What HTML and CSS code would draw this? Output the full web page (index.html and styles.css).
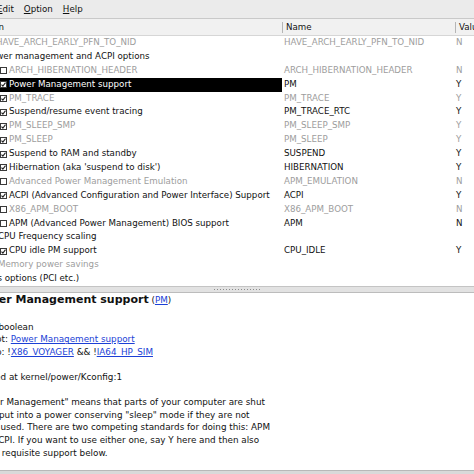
FILE: index.html
```html
<!DOCTYPE html>
<html lang="en">
<head>
    <meta charset="UTF-8">
    <meta name="viewport" content="width=device-width, initial-scale=1.0">
    <title>qconf - Linux Kernel Configuration</title>
    <link rel="stylesheet" href="styles.css">
</head>
<body>
    <div class="window">
        <div class="menubar">
            <span class="menu"><u>E</u>dit</span>
            <span class="menu"><u>O</u>ption</span>
            <span class="menu"><u>H</u>elp</span>
        </div>

        <div class="config-list">
            <div class="row header">
                <div class="col-option"><span class="hdr-option">Option</span></div>
                <div class="col-name">Name</div>
                <div class="col-value">Value</div>
            </div>

            <div class="row dim">
                <div class="col-option"><span class="sym-top">HAVE_ARCH_EARLY_PFN_TO_NID</span></div>
                <div class="col-name">HAVE_ARCH_EARLY_PFN_TO_NID</div>
                <div class="col-value">N</div>
            </div>
            <div class="row">
                <div class="col-option"><span class="menu-top">Power management and ACPI options</span></div>
                <div class="col-name"></div>
                <div class="col-value"></div>
            </div>
            <div class="row dim">
                <div class="col-option"><svg class="cb" viewBox="0 0 7 7"><rect x=".5" y=".5" width="6" height="6"/></svg>ARCH_HIBERNATION_HEADER</div>
                <div class="col-name">ARCH_HIBERNATION_HEADER</div>
                <div class="col-value">N</div>
            </div>
            <div class="row selected">
                <div class="col-option"><svg class="cb" viewBox="0 0 7 7"><rect x=".5" y=".5" width="6" height="6"/><path d="M1.5 3.6l1.4 1.5 2.6-3.4"/></svg>Power Management support</div>
                <div class="col-name">PM</div>
                <div class="col-value">Y</div>
            </div>
            <div class="row dim">
                <div class="col-option"><svg class="cb" viewBox="0 0 7 7"><rect x=".5" y=".5" width="6" height="6"/><path d="M1.5 3.6l1.4 1.5 2.6-3.4"/></svg>PM_TRACE</div>
                <div class="col-name">PM_TRACE</div>
                <div class="col-value">Y</div>
            </div>
            <div class="row">
                <div class="col-option"><svg class="cb" viewBox="0 0 7 7"><rect x=".5" y=".5" width="6" height="6"/><path d="M1.5 3.6l1.4 1.5 2.6-3.4"/></svg>Suspend/resume event tracing</div>
                <div class="col-name">PM_TRACE_RTC</div>
                <div class="col-value">Y</div>
            </div>
            <div class="row dim">
                <div class="col-option"><svg class="cb" viewBox="0 0 7 7"><rect x=".5" y=".5" width="6" height="6"/><path d="M1.5 3.6l1.4 1.5 2.6-3.4"/></svg>PM_SLEEP_SMP</div>
                <div class="col-name">PM_SLEEP_SMP</div>
                <div class="col-value">Y</div>
            </div>
            <div class="row dim">
                <div class="col-option"><svg class="cb" viewBox="0 0 7 7"><rect x=".5" y=".5" width="6" height="6"/><path d="M1.5 3.6l1.4 1.5 2.6-3.4"/></svg>PM_SLEEP</div>
                <div class="col-name">PM_SLEEP</div>
                <div class="col-value">Y</div>
            </div>
            <div class="row">
                <div class="col-option"><svg class="cb" viewBox="0 0 7 7"><rect x=".5" y=".5" width="6" height="6"/><path d="M1.5 3.6l1.4 1.5 2.6-3.4"/></svg>Suspend to RAM and standby</div>
                <div class="col-name">SUSPEND</div>
                <div class="col-value">Y</div>
            </div>
            <div class="row">
                <div class="col-option"><svg class="cb" viewBox="0 0 7 7"><rect x=".5" y=".5" width="6" height="6"/><path d="M1.5 3.6l1.4 1.5 2.6-3.4"/></svg>Hibernation (aka 'suspend to disk')</div>
                <div class="col-name">HIBERNATION</div>
                <div class="col-value">Y</div>
            </div>
            <div class="row dim">
                <div class="col-option"><svg class="cb" viewBox="0 0 7 7"><rect x=".5" y=".5" width="6" height="6"/></svg>Advanced Power Management Emulation</div>
                <div class="col-name">APM_EMULATION</div>
                <div class="col-value">N</div>
            </div>
            <div class="row">
                <div class="col-option"><svg class="cb" viewBox="0 0 7 7"><rect x=".5" y=".5" width="6" height="6"/><path d="M1.5 3.6l1.4 1.5 2.6-3.4"/></svg>ACPI (Advanced Configuration and Power Interface) Support</div>
                <div class="col-name">ACPI</div>
                <div class="col-value">Y</div>
            </div>
            <div class="row dim">
                <div class="col-option"><svg class="cb" viewBox="0 0 7 7"><rect x=".5" y=".5" width="6" height="6"/></svg>X86_APM_BOOT</div>
                <div class="col-name">X86_APM_BOOT</div>
                <div class="col-value">N</div>
            </div>
            <div class="row">
                <div class="col-option"><svg class="cb" viewBox="0 0 7 7"><rect x=".5" y=".5" width="6" height="6"/></svg>APM (Advanced Power Management) BIOS support</div>
                <div class="col-name">APM</div>
                <div class="col-value">N</div>
            </div>
            <div class="row">
                <div class="col-option"><span class="menu-sub">CPU Frequency scaling</span></div>
                <div class="col-name"></div>
                <div class="col-value"></div>
            </div>
            <div class="row">
                <div class="col-option"><svg class="cb" viewBox="0 0 7 7"><rect x=".5" y=".5" width="6" height="6"/><path d="M1.5 3.6l1.4 1.5 2.6-3.4"/></svg>CPU idle PM support</div>
                <div class="col-name">CPU_IDLE</div>
                <div class="col-value">Y</div>
            </div>
            <div class="row dim">
                <div class="col-option"><span class="menu-sub">Memory power savings</span></div>
                <div class="col-name"></div>
                <div class="col-value"></div>
            </div>
            <div class="row">
                <div class="col-option"><span class="menu-top">Bus options (PCI etc.)</span></div>
                <div class="col-name"></div>
                <div class="col-value"></div>
            </div>
        </div>

        <div class="splitter"><span class="grip"></span></div>

        <div class="info">
            <div class="info-content">
                <div class="info-title"><b>Power Management support</b> (<a href="#">PM</a>)</div>
                <div class="info-line">type: boolean</div>
                <div class="info-line">prompt: <a href="#">Power Management support</a></div>
                <div class="info-line dep">dep: !<a href="#">X86_VOYAGER</a> &amp;&amp; !<a href="#">IA64_HP_SIM</a></div>
                <div class="info-line gap">defined at kernel/power/Kconfig:1</div>
                <div class="info-help">
                    <div>"Power Management" means that parts of your computer are shut</div>
                    <div>off or put into a power conserving "sleep" mode if they are not</div>
                    <div>being used. There are two competing standards for doing this: APM</div>
                    <div>and ACPI. If you want to use either one, say Y here and then also</div>
                    <div>to the requisite support below.</div>
                </div>
            </div>
        </div>

        <div class="statusbar"></div>
    </div>
</body>
</html>
```

FILE: styles.css
```css
html, body {
    margin: 0;
    padding: 0;
    width: 474px;
    height: 474px;
    overflow: hidden;
    background-color: #fff;
}
.window {
    font-family: "DejaVu Sans", sans-serif;
    font-size: 8.7px;
    color: #111;
    display: flex;
    flex-direction: column;
    height: 474px;
}
.menubar {
    display: flex;
    height: 18px;
    line-height: 18px;
    margin-left: -8px;
    background-color: #ebebeb;
    border-bottom: 1px solid #c9c9c9;
}
.menu {
    padding: 0 5px;
}
.config-list {
    height: 267px;
    overflow: hidden;
    flex-shrink: 0;
}
.row {
    display: grid;
    grid-template-columns: 282px 173px 1fr;
    height: 13.9px;
    line-height: 13.9px;
    white-space: nowrap;
}
.row > div {
    overflow: hidden;
}
.col-option {
    display: flex;
    align-items: center;
}
.col-name {
    padding-left: 2px;
}
.col-value {
    padding-left: 1px;
}
.header {
    height: 16px;
    line-height: 16px;
    background-color: #f1f1f1;
    border-bottom: 1px solid #d6d6d6;
}
.header .col-name,
.header .col-value {
    padding-left: 4px;
    background: linear-gradient(#b5b5b5, #b5b5b5) no-repeat left center / 1px 11px;
}
.hdr-option {
    margin-left: -25px;
}
.sym-top {
    margin-left: -4px;
}
.menu-top {
    margin-left: -14px;
}
.menu-sub {
    margin-left: -2px;
}
.cb {
    width: 7px;
    height: 7px;
    margin-right: 2px;
    flex-shrink: 0;
}
.cb rect {
    fill: #fff;
    stroke: #3a3a3a;
    stroke-width: 1;
}
.cb path {
    fill: none;
    stroke: #222;
    stroke-width: 1.1;
}
.dim {
    color: #9d9d9d;
}
.selected .col-option {
    background-color: #000;
    color: #fff;
}
.splitter {
    height: 5px;
    display: flex;
    align-items: center;
    justify-content: center;
    background-color: #e2e2e2;
    border-top: 1px solid #c4c4c4;
    border-bottom: 1px solid #bcbcbc;
    flex-shrink: 0;
}
.grip {
    width: 46px;
    height: 1px;
    background-image: repeating-linear-gradient(90deg, #8c8c8c 0 1px, transparent 1px 3px);
}
.info {
    height: 177px;
    overflow: hidden;
    flex-shrink: 0;
    font-size: 8.8px;
    line-height: 12.6px;
    white-space: nowrap;
}
.info-content {
    margin-left: -27px;
}
.info-title {
    line-height: 14px;
    margin-bottom: 13.7px;
}
.info-title b {
    font-size: 11px;
}
.info a {
    color: #1c3fd6;
    text-decoration: underline;
}
.dep {
    padding-left: 12px;
}
.gap {
    margin-top: 12.6px;
}
.info-help {
    margin-top: 12.6px;
}
.statusbar {
    flex: 1;
    background-color: #d9d9d9;
    border-top: 1px solid #b8b8b8;
}
```
